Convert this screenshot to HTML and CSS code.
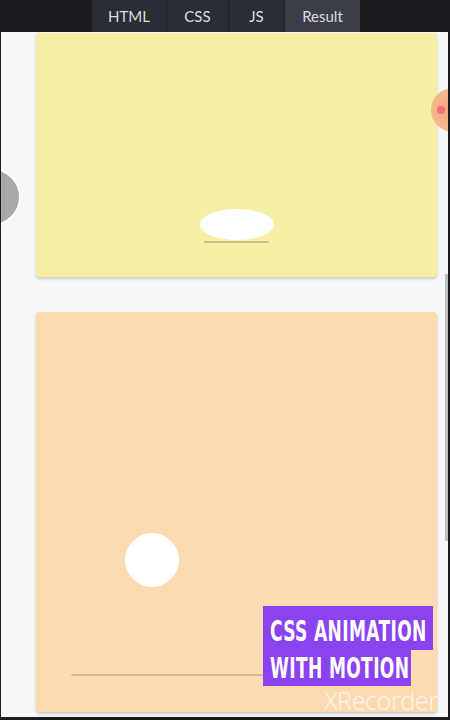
FILE: index.html
```html
<!DOCTYPE html>
<html>
<head>
<meta charset="utf-8">
<link rel="stylesheet" href="styles.css">
</head>
<body>
<div class="frame">
  <nav class="tabs">
    <span class="tab">HTML</span>
    <span class="tab">CSS</span>
    <span class="tab">JS</span>
    <span class="tab active">Result</span>
  </nav>
  <main class="result">
    <section class="card card-yellow">
      <div class="blob"></div>
      <div class="shadow-line short"></div>
    </section>
    <section class="card card-orange">
      <div class="ball"></div>
      <div class="spacer"></div>
      <div class="shadow-line long"></div>
    </section>
    <div class="scrollbar"></div>
    <div class="dot-left"></div>
    <div class="dot-right"><span class="dot-core"></span></div>
    <div class="label">
      <div class="label-line first"><span class="label-text">CSS ANIMATION</span></div>
      <div class="label-line second"><span class="label-text">WITH MOTION</span></div>
    </div>
    <div class="watermark">XRecorder</div>
  </main>
</div>
</body>
</html>
```
FILE: styles.css
```css
* { box-sizing: border-box; }
html, body { margin: 0; padding: 0; }
body { width: 450px; height: 720px; overflow: hidden; background: #1b1d21; font-family: Lato, "Open Sans", sans-serif; }
.frame { width: 450px; height: 720px; display: flex; flex-direction: column; background: #1b1d21; padding: 0 2px 3px 1px; }
.tabs { height: 32px; flex: none; display: flex; padding-left: 91px; }
.tab { display: flex; align-items: center; justify-content: center; color: #dcdde0; font-size: 15px; background: #2a2d34; border-right: 1px solid #1f2126; height: 32px; }
.tab:nth-child(1) { width: 75px; }
.tab:nth-child(2) { width: 62px; }
.tab:nth-child(3) { width: 56px; }
.tab.active { width: 75px; background: #3b3e47; border-right: none; }
.result { position: relative; flex: 1; background: #f7f7f7; overflow: hidden; padding: 1px 10px 0 35px; display: flex; flex-direction: column; gap: 35px; }
.card { width: 401px; border-radius: 4px; box-shadow: 0 2px 3px rgba(0,0,0,0.18); display: flex; flex-direction: column; flex: none; }
.card-yellow { height: 244px; background: #f7efa6; border-radius: 0 0 4px 4px; align-items: center; justify-content: flex-end; padding-bottom: 34px; }
.blob { width: 74px; height: 31px; border-radius: 50%; background: #fff; }
.shadow-line { height: 2px; border-radius: 1px; }
.shadow-line.short { width: 65px; background: #c9c08a; margin-top: 1px; }
.card-orange { height: 400px; background: #fcdab2; padding: 221px 35px 36px; }
.ball { width: 54px; height: 54px; border-radius: 50%; background: #fff; margin-left: 54px; }
.spacer { flex: 1; }
.shadow-line.long { width: 331px; background: #dcb88e; }
.scrollbar { position: absolute; right: 0; top: 242px; width: 3px; height: 267px; background: #bdbdbd; }
.dot-left { position: absolute; left: -38px; top: 136px; width: 58px; height: 58px; border-radius: 50%; background: #a9a9a9; border: 2px solid #fff; }
.dot-right { position: absolute; left: 430px; top: 56px; width: 44px; height: 44px; border-radius: 50%; background: radial-gradient(circle at 40% 50%, #f3a67f 0%, #f6b98d 55%, #f9cfa2 100%); display: flex; align-items: center; padding-left: 6px; }
.dot-core { width: 8px; height: 8px; border-radius: 50%; background: #ea6f78; }
.label { position: absolute; left: 262px; top: 574px; display: flex; flex-direction: column; align-items: flex-start; }
.label-line { background: #8b43ef; white-space: nowrap; display: flex; align-items: center; padding-left: 7px; }
.label-line.first { width: 170px; height: 44px; padding-top: 4px; }
.label-line.second { width: 148px; height: 36px; padding-bottom: 2px; }
.label-text { display: inline-block; color: #fff; font-family: "DejaVu Sans Condensed", "DejaVu Sans", sans-serif; font-weight: bold; font-size: 19px; line-height: 22px; transform: scaleY(1.52); transform-origin: center; letter-spacing: 0.35px; }
.watermark { position: absolute; left: 323px; top: 651px; color: rgba(255,255,255,0.78); font-family: "Open Sans", sans-serif; font-size: 25.5px; font-weight: 300; letter-spacing: -0.6px; white-space: nowrap; }
```
